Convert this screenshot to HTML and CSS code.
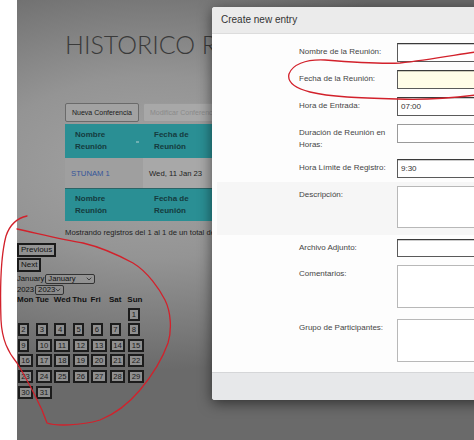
FILE: index.html
```html
<!DOCTYPE html>
<html lang="es">
<head>
<meta charset="utf-8">
<title>Historico Reuniones</title>
<link rel="stylesheet" href="styles.css">
</head>
<body>
<div class="screen">
  <div class="gutter"></div>
  <div class="page">
    <div class="main">
      <h1 class="title">HISTORICO REUNIONES</h1>
      <div class="toolbar">
        <button class="tbtn">Nueva Conferencia</button>
        <button class="tbtn tbtn-muted">Modificar Conferencia</button>
      </div>
      <table class="records">
        <colgroup><col class="c1"><col class="c2"></colgroup>
        <thead>
          <tr>
            <th><div class="sort"><span>Nombre<br>Reunión</span><i class="sort-mark"></i></div></th>
            <th class="th2">Fecha de<br>Reunión</th>
          </tr>
        </thead>
        <tbody>
          <tr>
            <td class="td1"><span class="link">STUNAM 1</span></td>
            <td class="td2">Wed, 11 Jan 23</td>
          </tr>
        </tbody>
        <tfoot>
          <tr>
            <th>Nombre<br>Reunión</th>
            <th class="th2">Fecha de<br>Reunión</th>
          </tr>
        </tfoot>
      </table>
      <p class="info">Mostrando registros del 1 al 1 de un total de 1 registros</p>
    </div>

    <div class="calendar">
      <button class="cal-btn">Previous</button>
      <button class="cal-btn">Next</button>
      <div class="cal-pick">January<span class="select sel-month">January<svg class="chev" viewBox="0 0 6 4" width="6" height="4"><polyline points="0.7,0.7 3,3 5.3,0.7"/></svg></span></div>
      <div class="cal-pick">2023<span class="select sel-year">2023<svg class="chev" viewBox="0 0 6 4" width="6" height="4"><polyline points="0.7,0.7 3,3 5.3,0.7"/></svg></span></div>
      <div class="cal-grid">
        <span class="dow">Mon</span><span class="dow">Tue</span><span class="dow">Wed</span><span class="dow">Thu</span><span class="dow">Fri</span><span class="dow">Sat</span><span class="dow">Sun</span>
        <button class="day day-first">1</button>
        <button class="day">2</button><button class="day">3</button><button class="day">4</button><button class="day">5</button><button class="day">6</button><button class="day">7</button><button class="day">8</button>
        <button class="day">9</button><button class="day">10</button><button class="day">11</button><button class="day">12</button><button class="day">13</button><button class="day">14</button><button class="day">15</button>
        <button class="day">16</button><button class="day">17</button><button class="day">18</button><button class="day">19</button><button class="day">20</button><button class="day">21</button><button class="day">22</button>
        <button class="day">23</button><button class="day">24</button><button class="day">25</button><button class="day">26</button><button class="day">27</button><button class="day">28</button><button class="day">29</button>
        <button class="day">30</button><button class="day">31</button>
      </div>
    </div>
  </div>

  <div class="modal">
    <div class="modal-head">Create new entry</div>
    <div class="modal-body">
      <div class="field"><span class="label">Nombre de la Reunión:</span><div class="input"></div></div>
      <div class="field"><span class="label">Fecha de la Reunión:</span><div class="input input-date"></div></div>
      <div class="field"><span class="label">Hora de Entrada:</span><div class="input">07:00</div></div>
      <div class="field"><span class="label">Duración de Reunión en Horas:</span><div class="input input-soft"></div></div>
      <div class="field"><span class="label">Hora Límite de Registro:</span><div class="input">9:30</div></div>
      <div class="field field-hl"><span class="label">Descripción:</span><div class="area"></div></div>
      <div class="field"><span class="label">Archivo Adjunto:</span><div class="input input-file"></div></div>
      <div class="field"><span class="label">Comentarios:</span><div class="area area-tall"></div></div>
      <div class="field"><span class="label">Grupo de Participantes:</span><div class="area area-tall"></div></div>
    </div>
    <div class="modal-foot"></div>
  </div>

  <svg class="ink" viewBox="0 0 474 440" width="474" height="440">
    <path d="M 27 216 C 18 218, 10 224, 6 236 C 1 255, 0 290, 1 320 C 2 340, 8 352, 17 363 C 25 376, 35 395, 42 410 L 47 423 C 55 426, 80 426, 100 420 C 115 414, 130 402, 140 390 C 150 378, 162 360, 168 343 C 172 330, 171 312, 165 300 C 160 290, 148 272, 133 263 C 120 256, 100 247, 83 243 C 65 240, 40 234, 17 229"/>
    <path d="M 476 52 C 460 54, 430 60, 400 63 C 380 64, 350 62, 325 60 C 305 59, 292 65, 289 74 C 287 82, 295 88, 310 92 C 330 97, 360 98, 397 99 C 420 100, 445 99, 476 95"/>
  </svg>
</div>
</body>
</html>
```

FILE: styles.css
```css
html, body {
  margin: 0;
  height: 100%;
  overflow: hidden;
  background: #ffffff;
}

body {
  font-family: "Liberation Sans", Arial, sans-serif;
}

.screen {
  position: relative;
  display: flex;
  width: 474px;
  height: 440px;
  overflow: hidden;
}

.gutter {
  flex: none;
  width: 17px;
  background: #ffffff;
}

.page {
  flex: 1;
  min-width: 0;
  overflow: hidden;
  background: radial-gradient(ellipse 80% 46% at 30% 38%, #a4a4a4 0%, #949494 45%, #7a7a7a 80%, #6a6a6a 100%);
}

/* the part of the page that the dialog leaves visible */
.main {
  width: 147px;
  margin-left: 48px;
  overflow: hidden;
}

.title {
  margin: 29px 0 0;
  font-family: Lato, "Open Sans", sans-serif;
  font-weight: 300;
  font-size: 25px;
  line-height: 30px;
  color: #3a3a3a;
  white-space: nowrap;
}

.toolbar {
  display: flex;
  gap: 4px;
  margin: 44px 0 2px;
}

.tbtn {
  flex: none;
  box-sizing: border-box;
  height: 19px;
  margin: 0;
  padding: 0 6px;
  border: 1px solid #6a6a6a;
  border-radius: 2px;
  background: #a2a2a2;
  color: #1a1a1a;
  font-family: "Liberation Sans", Arial, sans-serif;
  font-size: 7px;
  white-space: nowrap;
}

.tbtn-muted {
  color: #8a8a8a;
  border-color: #9a9a9a;
  background: #a8a8a8;
}

.records {
  border-collapse: collapse;
  table-layout: fixed;
  width: 420px;
}

.c1 { width: 78px; }
.c2 { width: 342px; }

.records th {
  background: #2a8f94;
  color: #153b3e;
  font-family: "Liberation Sans", Arial, sans-serif;
  font-weight: bold;
  font-size: 8px;
  line-height: 12px;
  text-align: left;
  vertical-align: middle;
  padding: 5px 4px 5px 10px;
}

.records th.th2 {
  padding-left: 11px;
}

.records tfoot th {
  padding-top: 4px;
  padding-bottom: 4px;
  border-top: 1px solid #2b6466;
}

.sort {
  display: flex;
  align-items: center;
  justify-content: space-between;
}

.sort-mark {
  display: block;
  width: 3px;
  height: 2px;
  margin-top: 2px;
  background: #6fb0b3;
}

.records td {
  height: 30px;
  padding: 0 0 0 6px;
  font-size: 7.7px;
  color: #222222;
  background: #a8a8a8;
  white-space: nowrap;
}

.records td.td1 {
  background: #9f9f9f;
}

.link {
  color: #34559a;
}

.info {
  margin: 6px 0 0;
  font-size: 7.7px;
  line-height: 12px;
  color: #1f1f1f;
  white-space: nowrap;
}

/* calendar */
.calendar {
  display: flex;
  flex-direction: column;
  align-items: flex-start;
  margin-top: 4px;
  font-size: 7.7px;
  color: #111111;
}

.cal-btn {
  box-sizing: border-box;
  height: 14px;
  margin: 0 0 1px;
  padding: 0 2px;
  border: 2px solid #1a1a1a;
  background: rgba(255, 255, 255, 0.04);
  color: #111111;
  font-family: "Liberation Sans", Arial, sans-serif;
  font-size: 8px;
  line-height: 10px;
}

.cal-pick {
  display: flex;
  align-items: center;
  height: 11px;
  line-height: 11px;
}

.select {
  box-sizing: border-box;
  display: inline-flex;
  align-items: center;
  justify-content: space-between;
  height: 10px;
  margin-left: 1px;
  padding: 0 2px 0 2px;
  border: 1px solid #333333;
  border-radius: 2px;
  background: rgba(255, 255, 255, 0.07);
  line-height: 8px;
}

.sel-month { width: 50px; }
.sel-year { width: 29px; }

.chev {
  display: block;
  fill: none;
  stroke: #333333;
  stroke-width: 0.9;
}

.cal-grid {
  display: grid;
  grid-template-columns: repeat(7, 18.4px);
  grid-template-rows: 10px repeat(6, 13px);
  row-gap: 2.6px;
}

.dow {
  font-weight: bold;
  font-size: 8px;
  line-height: 10px;
  white-space: nowrap;
}

.day {
  box-sizing: border-box;
  justify-self: start;
  height: 13px;
  margin: 0 0 0 0.7px;
  padding: 0 1.6px;
  border: 2px solid #1c1c1c;
  background: #8f8f8f;
  color: #1a1a1a;
  font-family: "Liberation Sans", Arial, sans-serif;
  font-size: 7.7px;
  line-height: 9px;
}

.day-first {
  grid-column-start: 7;
}

/* modal */
.modal {
  position: absolute;
  left: 212px;
  top: 7px;
  width: 300px;
  height: 393px;
  display: flex;
  flex-direction: column;
  background: #fdfdfd;
  border-radius: 3px;
  box-shadow: 0 3px 14px rgba(0, 0, 0, 0.55);
  overflow: hidden;
}

.modal-head {
  flex: none;
  box-sizing: border-box;
  height: 27px;
  padding-left: 9px;
  background: #ebebeb;
  border-bottom: 1px solid #dcdcdc;
  color: #333333;
  font-size: 10px;
  line-height: 26px;
}

.modal-body {
  flex: 1;
  padding: 5px 0 0 5px;
}

.field {
  display: grid;
  grid-template-columns: 98px 1fr;
  align-items: start;
  padding: 4px 0 4px 82px;
}

.field-hl {
  background: #f6f6f6;
}

.label {
  padding-top: 3px;
  font-size: 8px;
  line-height: 12px;
  color: #454545;
}

.input {
  box-sizing: border-box;
  height: 19px;
  padding: 0 3px;
  border: 1px solid #5a5a5a;
  border-top-color: #3a3a3a;
  box-shadow: inset 0 1px 0 rgba(0, 0, 0, 0.2);
  background: #ffffff;
  color: #333333;
  font-size: 8px;
  line-height: 17px;
}

.input-soft {
  border-color: #9a9a9a;
  box-shadow: none;
}

.input-date {
  background: #fffde8;
}

.input-file {
  height: 18px;
  line-height: 16px;
}

.area {
  box-sizing: border-box;
  height: 42px;
  margin-bottom: 3px;
  border: 1px solid #b8b8b8;
  background: #ffffff;
}

.area-tall {
  height: 43px;
}

.modal-foot {
  flex: none;
  box-sizing: border-box;
  height: 28px;
  background: #e7e8ea;
  border-top: 1px solid #d5d6d8;
}

/* hand-drawn annotation marks */
.ink {
  position: absolute;
  left: 0;
  top: 0;
  pointer-events: none;
  fill: none;
  stroke: #d2212b;
  stroke-width: 1.3;
  stroke-linecap: round;
  stroke-linejoin: round;
}
```
